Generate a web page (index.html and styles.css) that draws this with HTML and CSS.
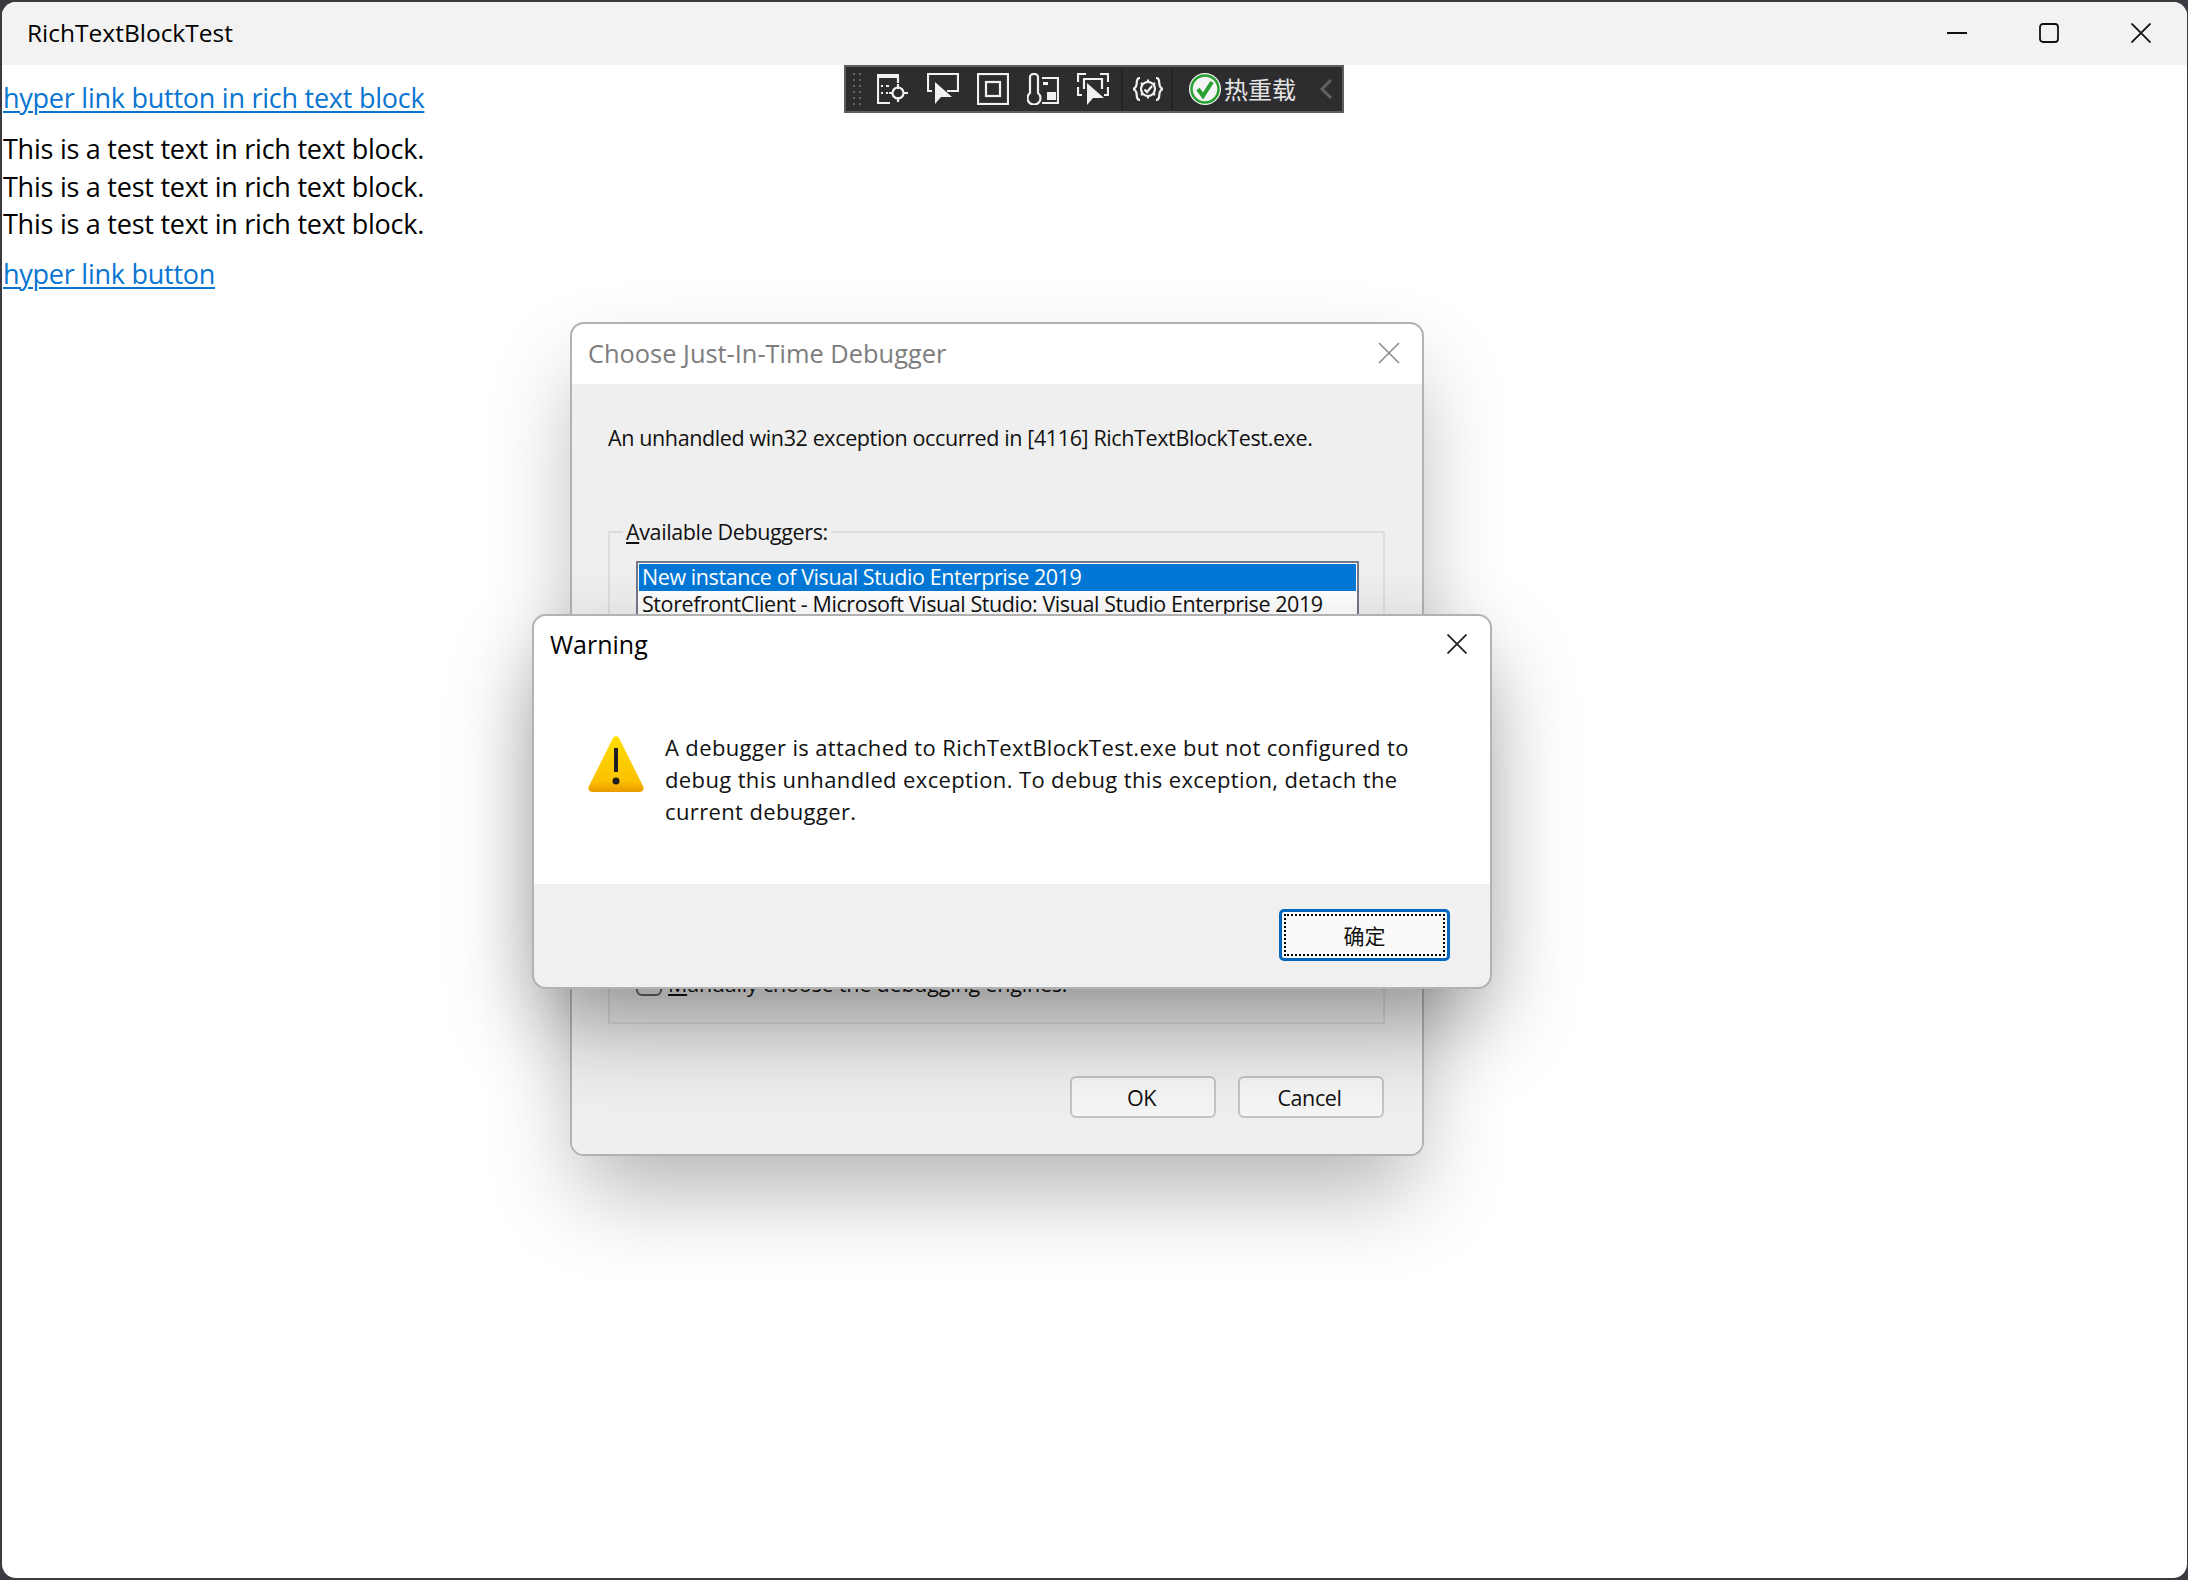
FILE: index.html
```html
<!DOCTYPE html>
<html lang="en">
<head>
<meta charset="utf-8">
<title>RichTextBlockTest</title>
<link rel="stylesheet" href="styles.css">
</head>
<body>
<div class="window">
  <header class="titlebar">
    <span class="app-title">RichTextBlockTest</span>
    <div class="caption">
      <svg class="cap" viewBox="0 0 20 20"><path d="M0 10H20"/></svg>
      <svg class="cap" viewBox="0 0 20 20"><rect x="1" y="1" width="18" height="18" rx="3"/></svg>
      <svg class="cap" viewBox="0 0 20 20"><path d="M0.5 0.5L19.5 19.5M19.5 0.5L0.5 19.5"/></svg>
    </div>
  </header>
  <main class="content">
    <a class="link link-first" href="#">hyper link button in rich text block</a>
    <div class="rich">
      <p>This is a test text in rich text block.</p>
      <p>This is a test text in rich text block.</p>
      <p>This is a test text in rich text block.</p>
    </div>
    <a class="link" href="#">hyper link button</a>

    <div class="toolbar">
      <span class="grip"></span>
      <svg class="tool" viewBox="0 0 32 32"><path class="fill" d="M0 1H22V5H0Z"/><path d="M1 5V30H13M21 5V10M4 13H6M9 13H12M4 20H6M9 20H11"/><circle cx="21" cy="20" r="5.5"/><path d="M21 11V16M21 24V29M12 20H16M26 20H31"/></svg>
      <svg class="tool" viewBox="0 0 32 32"><path d="M5 18H1V1H31V18H20"/><path class="fill" d="M8 9V31L14 24H25Z"/></svg>
      <svg class="tool" viewBox="0 0 32 32"><rect x="1" y="1" width="30" height="30"/><rect x="9" y="9" width="14" height="14"/></svg>
      <svg class="tool" viewBox="0 0 32 32"><path d="M3 20V4A4 3 0 0 1 11 4V20A6.5 6.5 0 1 1 3 20Z"/><path d="M15 5H31V30H15"/><path class="fill" d="M16 9H21V12H16ZM20 19H29V27H20Z"/></svg>
      <svg class="tool" viewBox="0 0 32 32"><path d="M9 1H1V9M23 1H31V9M1 14V22H5M31 14V22H27M7 16V6H25V16"/><path class="fill" d="M10 10V32L16 25H27Z"/></svg>
      <span class="tool-sep sep-a"></span>
      <svg class="tool tool-gear" viewBox="0 0 30 24"><path d="M7 1C3 1 4 5 3.5 8C3.2 10 2 11 .5 12C2 13 3.2 14 3.500 16C4 19 3 23 7 23M23 1C27 1 26 5 26.500 8C26.800 10 28 11 29.500 12C28 13 26.800 14 26.500 16C26 19 27 23 23 23"/><circle cx="15" cy="12" r="7"/><path d="M11.500 12.500L14 15L19 9"/><path d="M15 2.500V5M15 19V21.500M8 6L10 7.500M22 6L20 7.500M8 18L10 16.500M22 18L20 16.500"/></svg>
      <span class="tool-sep sep-b"></span>
      <svg class="hot-check" viewBox="0 0 34 34"><circle class="ring-w" cx="17" cy="17" r="16"/><circle class="ring-g" cx="17" cy="17" r="13.500"/><path class="tick" d="M10 17L15 24L24 10"/></svg>
      <span class="hot-label">热重载</span>
      <svg class="chevron" viewBox="0 0 14 20"><path d="M12 1L3 10L12 19"/></svg>
    </div>

    <section class="dialog jit">
      <div class="jit-head">
        <span class="jit-title">Choose Just-In-Time Debugger</span>
        <svg class="close close-muted" viewBox="0 0 22 22"><path d="M1 1L21 21M21 1L1 21"/></svg>
      </div>
      <div class="jit-body">
        <p class="jit-msg">An unhandled win32 exception occurred in [4116] RichTextBlockTest.exe.</p>
        <div class="group">
          <span class="legend"><u>A</u>vailable Debuggers:</span>
          <div class="listbox">
            <div class="row row-sel">New instance of Visual Studio Enterprise 2019</div>
            <div class="row">StorefrontClient - Microsoft Visual Studio: Visual Studio Enterprise 2019</div>
          </div>
          <label class="check"><span class="box"></span><span class="check-text"><u>M</u>anually choose the debugging engines.</span></label>
        </div>
        <div class="jit-actions">
          <span class="btn">OK</span>
          <span class="btn">Cancel</span>
        </div>
      </div>
    </section>

    <section class="dialog warn">
      <div class="warn-main">
        <div class="warn-head">
          <span class="warn-title">Warning</span>
          <svg class="close" viewBox="0 0 20 20"><path d="M.5 .5L19.500 19.500M19.500 .5L.5 19.500"/></svg>
        </div>
        <div class="warn-msg">
          <svg class="warn-icon" viewBox="0 0 56 56">
            <defs><linearGradient id="amber" x1="0" y1="0" x2="0" y2="1"><stop offset="0" stop-color="#ffdf00"/><stop offset=".8" stop-color="#fdc000"/><stop offset="1" stop-color="#e89a00"/></linearGradient></defs>
            <path class="tri" d="M25 2C26.500 -.5 29.500 -.5 31 2L55 50C56.500 53 55 56 52 56H4C1 56 -.5 53 1 50Z"/>
            <rect class="mark" x="26" y="12" width="4" height="24"/><circle class="mark" cx="28" cy="45" r="3.500"/>
          </svg>
          <p class="warn-text">A debugger is attached to RichTextBlockTest.exe but not configured to debug this unhandled exception. To debug this exception, detach the current debugger.</p>
        </div>
      </div>
      <div class="warn-foot">
        <span class="btn-focus"><span class="btn-dots">确定</span></span>
      </div>
    </section>
  </main>
</div>
</body>
</html>
```
FILE: styles.css
```css
* { box-sizing: border-box; }
html, body { height: 100%; }
body {
  margin: 0;
  background: #3a3a40;
  font-family: "Open Sans", "Noto Sans CJK SC", sans-serif;
  color: #000;
  overflow: hidden;
}
p { margin: 0; }

.window {
  height: 1576px;
  margin: 2px 1px 0 2px;
  display: flex;
  flex-direction: column;
  background: #fff;
  border-radius: 14px;
  overflow: hidden;
}
.titlebar {
  height: 63px;
  flex: none;
  background: #f2f2f2;
  display: flex;
  align-items: center;
  justify-content: space-between;
  padding-left: 25px;
}
.app-title { font-size: 24.500px; position: relative; top: -1px; }
.caption { display: flex; align-items: center; gap: 72px; padding-right: 36px; }
.cap { width: 20px; height: 20px; fill: none; stroke: #111; stroke-width: 1.800; position: relative; top: -1px; }

.content { position: relative; flex: 1; padding: 14px 0 0 1px; font-size: 27px; }
.link { display: block; width: fit-content; color: #0875d1; line-height: 37px; letter-spacing: -.25px; text-decoration-thickness: 2px; text-underline-offset: 3px; }
.link-first { margin-bottom: 14px; }
.rich { line-height: 37.500px; letter-spacing: -.25px; margin-bottom: 12px; }

.toolbar {
  position: absolute;
  left: 842px;
  top: 0;
  width: 500px;
  height: 48px;
  display: flex;
  align-items: center;
  background: #2d2d30;
  border: 2px solid #5f5f62;
  padding-left: 5px;
}
.grip {
  width: 12px;
  height: 36px;
  margin-right: 14px;
  background-image: radial-gradient(#66666a 1px, transparent 1.300px);
  background-size: 6px 6px;
}
.tool { width: 32px; height: 32px; margin-right: 18px; fill: none; stroke: #f1f1f1; stroke-width: 2.200; flex: none; }
.tool .fill { fill: #f1f1f1; stroke: none; }
.tool-sep { width: 2px; height: 42px; background: #232325; flex: none; margin-left: -6px; }
.sep-a { margin-right: 10px; }
.sep-b { margin-right: 15px; }
.tool-gear { width: 30px; height: 24px; margin-right: 14px; stroke-width: 2.200; }
.hot-check { width: 34px; height: 34px; flex: none; }
.ring-w { fill: #f4f4f4; }
.ring-g { fill: #f4f4f4; stroke: #27a030; stroke-width: 2.500; }
.tick { fill: none; stroke: #27a030; stroke-width: 4; }
.hot-label { margin-left: 2px; font-size: 24px; color: #e4e4e4; font-family: "Noto Sans CJK SC", sans-serif; line-height: 1; }
.chevron { width: 14px; height: 20px; margin-left: 23px; fill: none; stroke: #606063; stroke-width: 3; }

.dialog { position: absolute; background: #fff; }
.jit {
  left: 568px;
  top: 257px;
  width: 854px;
  height: 834px;
  display: flex;
  flex-direction: column;
  border: 2px solid #b2b2b2;
  border-radius: 14px;
  box-shadow: 0 44px 90px -10px rgba(0,0,0,.3);
  color: #111;
}
.jit-head {
  height: 60px;
  flex: none;
  display: flex;
  align-items: center;
  justify-content: space-between;
  padding: 0 22px 2px 16px;
  border-radius: 12px 12px 0 0;
}
.jit-title { font-size: 25.400px; color: #7d7d7d; }
.close { width: 20px; height: 20px; fill: none; stroke: #222; stroke-width: 1.800; flex: none; }
.close-muted { width: 22px; height: 22px; stroke: #8c8c8c; stroke-width: 1.600; }
.jit-body {
  flex: 1;
  background: #efefef;
  border-radius: 0 0 12px 12px;
  padding: 39px 36px 0 36px;
  font-size: 21.500px;
  letter-spacing: -.38px;
}
.jit-msg { line-height: 30px; }
.group {
  position: relative;
  margin-top: 78px;
  margin-right: 1px;
  height: 493px;
  border: 2px solid #dedede;
  padding: 28px 24px 0 26px;
}
.legend {
  position: absolute;
  left: 13px;
  top: -16px;
  padding: 0 3px;
  background: #efefef;
  line-height: 30px;
}
.listbox { height: 320px; border: 2px solid #73788a; background: #fff; padding: 1px 1px; line-height: 26.500px; letter-spacing: -.42px; }
.row { padding-left: 3px; height: 26.500px; white-space: nowrap; }
.row-sel { background: #0078d7; color: #fff; }
.check { display: flex; align-items: center; gap: 6px; margin-top: 85px; line-height: 30px; }
.check-text { padding-top: 3px; letter-spacing: -.2px; }
.box { width: 26px; height: 26px; border: 2px solid #666; border-radius: 6px; }
.jit-actions { display: flex; justify-content: flex-end; gap: 22px; margin: 52px 0 0; padding-right: 2px; }
.btn {
  width: 146px;
  height: 42px;
  display: flex;
  align-items: center;
  justify-content: center;
  padding-right: 3px;
  background: #f5f5f5;
  border: 2px solid #c4c4c4;
  border-radius: 6px;
}

.warn {
  left: 530px;
  top: 549px;
  width: 960px;
  height: 375px;
  display: flex;
  flex-direction: column;
  border: 2px solid #b2b2b2;
  border-radius: 14px;
  box-shadow: 0 40px 90px -10px rgba(0,0,0,.42);
  background: #f0f0f0;
}
.warn-main { height: 268px; flex: none; background: #fff; padding: 0 23px 0 16px; border-radius: 12px 12px 0 0; }
.warn-head { height: 56px; display: flex; align-items: center; justify-content: space-between; }
.warn-title { font-size: 25px; color: #000; }
.warn-msg { display: flex; align-items: flex-start; margin-top: 64px; padding-left: 38px; }
.warn-icon { width: 56px; height: 56px; flex: none; }
.tri { fill: url(#amber); }
.mark { fill: #1e1e1e; }
.warn-text { margin: -5px 0 0 21px; width: 760px; font-size: 22px; line-height: 32px; letter-spacing: .37px; color: #111; }
.warn-foot { flex: 1; display: flex; justify-content: flex-end; padding: 25px 40px 0 0; }
.btn-focus {
  width: 171px;
  height: 52px;
  padding: 2px;
  background: #fafafa;
  border: 3px solid #0067c0;
  border-radius: 5px;
}
.btn-dots {
  display: flex;
  align-items: center;
  justify-content: center;
  height: 100%;
  border: 2px dotted #000;
  font-family: "Noto Sans CJK SC", sans-serif;
  font-size: 21px;
  color: #111;
}
```
